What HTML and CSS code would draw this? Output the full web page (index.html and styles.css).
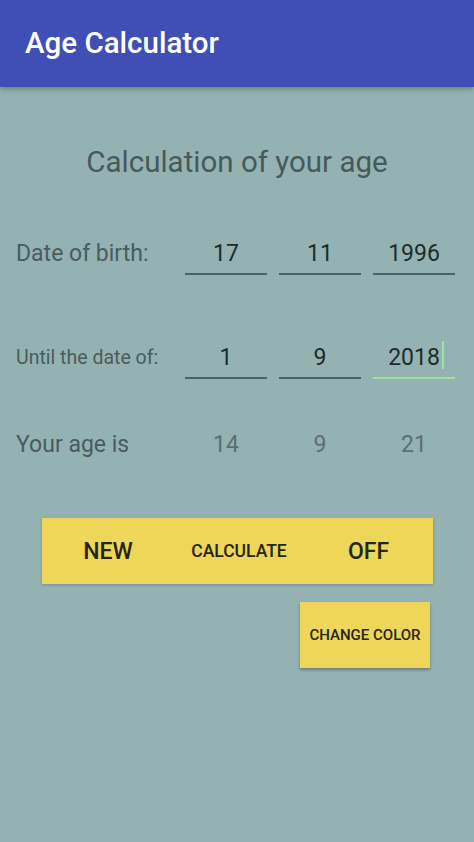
FILE: index.html
```html
<!DOCTYPE html>
<html>
<head>
<meta charset="utf-8">
<link rel="stylesheet" href="styles.css">
</head>
<body>
<div class="app">
  <header class="bar"><span class="bar-title">Age Calculator</span></header>
  <main class="content">
    <h1 class="title">Calculation of your age</h1>
    <div class="row row-birth">
      <div class="label">Date of birth:</div>
      <div class="field"><span>17</span></div>
      <div class="field"><span>11</span></div>
      <div class="field"><span>1996</span></div>
    </div>
    <div class="row row-until">
      <div class="label label-small">Until the date of:</div>
      <div class="field"><span>1</span></div>
      <div class="field"><span>9</span></div>
      <div class="field field-focus"><span>2018<i class="caret"></i></span></div>
    </div>
    <div class="row row-age">
      <div class="label">Your age is</div>
      <div class="result">14</div>
      <div class="result">9</div>
      <div class="result">21</div>
    </div>
    <div class="actions">
      <button class="btn btn-big">NEW</button>
      <button class="btn btn-mid">CALCULATE</button>
      <button class="btn btn-big">OFF</button>
    </div>
    <div class="secondary">
      <button class="btn-color">CHANGE COLOR</button>
    </div>
  </main>
</div>
</body>
</html>
```
FILE: styles.css
```css
html, body {
  margin: 0;
  padding: 0;
}
body {
  width: 474px;
  height: 842px;
  background: #94b2b2;
  font-family: Roboto, "Noto Sans", sans-serif;
  overflow: hidden;
}
.app {
  display: flex;
  flex-direction: column;
  height: 842px;
}
.bar {
  height: 87px;
  background: #3f4fb5;
  display: flex;
  align-items: center;
  padding-left: 25px;
  box-shadow: 0 2px 5px rgba(0,0,0,0.3);
  position: relative;
  z-index: 1;
}
.bar-title {
  color: #fff;
  font-size: 29.5px;
  font-weight: 500;
  margin-top: -2px;
}
.title {
  margin: 57px 0 0;
  text-align: center;
  font-weight: 400;
  font-size: 29.5px;
  line-height: 36px;
  color: #48595a;
}
.row {
  display: grid;
  grid-template-columns: 157px 82px 82px 82px;
  column-gap: 12px;
  padding-left: 16px;
}
.row-birth { margin-top: 54px; }
.row-until { margin-top: 63px; }
.row-age { margin-top: 50px; }
.label {
  font-size: 23px;
  color: #4a5c5d;
  line-height: 32px;
  align-self: center;
  white-space: nowrap;
}
.row-birth .label { margin-top: -2px; }
.label-small { font-size: 19.5px; }
.row-until .label { margin-top: -1px; }
.field {
  height: 41px;
  border-bottom: 2px solid #4e6263;
  display: flex;
  justify-content: center;
  align-items: center;
  font-size: 23px;
  color: #1f2a2a;
  box-sizing: border-box;
}
.field-focus {
  border-bottom-color: #9de39e;
}
.field-focus span {
  position: relative;
}
.caret {
  position: absolute;
  right: -4px;
  top: -3px;
  width: 2px;
  height: 28px;
  background: #9de39e;
}
.result {
  text-align: center;
  font-size: 23px;
  color: #5b6f70;
  line-height: 32px;
}
.actions {
  margin: 57px 41px 0 42px;
  height: 66px;
  background: #eed659;
  display: grid;
  grid-template-columns: 132px 130px 129px;
  align-items: center;
  box-shadow: 0 1px 3px rgba(0,0,0,0.2);
}
.btn {
  background: none;
  border: 0;
  padding: 0;
  font-family: Roboto, "Noto Sans", sans-serif;
  font-weight: 500;
  color: #252511;
  text-align: center;
}
.btn-big { font-size: 23px; }
.btn-mid { font-size: 17.5px; }
.secondary {
  display: flex;
  justify-content: flex-end;
  padding-right: 44px;
  margin-top: 18px;
}
.btn-color {
  width: 130px;
  height: 66px;
  background: #eed659;
  border: 0;
  font-family: Roboto, "Noto Sans", sans-serif;
  font-weight: 500;
  font-size: 15px;
  color: #252511;
  box-shadow: 0 2px 3px rgba(0,0,0,0.3);
  padding: 0;
}
```
